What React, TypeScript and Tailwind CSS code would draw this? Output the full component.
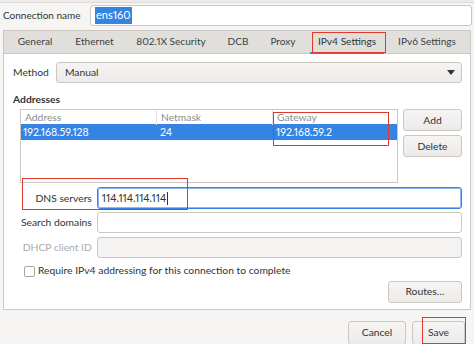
import React from 'react';

const tabs = [
  { label: 'General', w: 'w-[58px]' },
  { label: 'Ethernet', w: 'w-[61px]' },
  { label: '802.1X Security', w: 'w-[92px]' },
  { label: 'DCB', w: 'w-[42px]' },
  { label: 'Proxy', w: 'w-[48px]' },
  { label: 'IPv4 Settings', w: 'w-[80px]', active: true },
  { label: 'IPv6 Settings', w: 'w-[80px]' },
];

const Button: React.FC<{ className?: string; children: React.ReactNode }> = ({
  className = '',
  children,
}) => (
  <div
    className={`flex items-center justify-center rounded-[3px] border border-[#cdc7c2] bg-gradient-to-b from-[#f6f5f4] to-[#edebe9] text-[#2e3436] ${className}`}
  >
    {children}
  </div>
);

const FieldRow: React.FC<{
  label: string;
  disabled?: boolean;
  className?: string;
}> = ({ label, disabled, className = '' }) => (
  <div className={`flex h-[21px] items-center ${className}`}>
    <div
      className={`w-[85px] whitespace-nowrap pr-[5px] text-right ${disabled ? 'text-[#a9abab]' : 'text-[#2e3436]'}`}
    >
      {label}
    </div>
    <div
      className={`h-full w-[366px] rounded-[3px] border border-[#cdc7c2] ${disabled ? 'bg-[#f4f3f2]' : 'bg-white'}`}
    />
  </div>
);

export default function App() {
  return (
    <div className="relative h-[344px] w-[474px] overflow-hidden whitespace-nowrap bg-[#f6f5f4] font-['Lato','Noto_Sans',sans-serif] text-[10.3px] text-[#2e3436] lining-nums proportional-nums">
      <div className="h-[3px] border-b border-[#dedbd8] bg-[#ecebe9]" />

      {/* connection name */}
      <div className="flex h-[26px] items-center pb-[1px]">
        <div className="w-[90px] pl-[3px] text-[10px]">Connection name</div>
        <div className="flex h-[21px] w-[382px] items-center rounded-[3px] border border-[#cdc7c2] bg-white pl-[4px] text-[11px]">
          <span className="bg-[#3584e4] px-[1px] text-white">ens160</span>
        </div>
      </div>

      {/* notebook */}
      <div className="ml-[3px] mt-[1px] h-[280px] w-[468px] border border-[#cdc7c2] bg-white">
        <div className="flex h-[23px] border-b border-[#cdc7c2] bg-[#e1dfdc] pl-[2px]">
          {tabs.map((t) => (
            <div
              key={t.label}
              className={`${t.w} relative flex items-center justify-center text-[10.1px] ${t.active ? 'text-[#2e3436]' : 'text-[#3d3f40]'}`}
            >
              {t.label}
              {t.active && (
                <div className="absolute bottom-[-1px] left-[3px] right-[3px] h-[2px] bg-[#3584e4]" />
              )}
            </div>
          ))}
        </div>

        <div className="px-[8px] pt-[8px]">
          {/* method */}
          <div className="flex h-[21px] items-center">
            <div className="w-[44px] pl-[1px]">Method</div>
            <Button className="h-full w-[407px] !justify-between pl-[8px] pr-[6px]">
              <span>Manual</span>
              <svg width="8" height="5" viewBox="0 0 8 5">
                <path d="M0 0 L8 0 L4 5 Z" fill="#2e3436" />
              </svg>
            </Button>
          </div>

          <div className="mt-[9px] pl-[1px] font-bold">Addresses</div>

          {/* table + buttons */}
          <div className="mt-[2px] flex gap-[5px] pl-[8px]">
            <div className="h-[74px] w-[378px] border border-[#cdc7c2] bg-white">
              <div className="flex h-[14px] items-center text-[#8b8e8f]">
                <div className="w-[136px] border-r border-[#e6e4e2] pl-[4px]">Address</div>
                <div className="w-[116px] border-r border-[#e6e4e2] pl-[4px]">Netmask</div>
                <div className="pl-[4px]">Gateway</div>
              </div>
              <div className="flex h-[16px] items-center bg-[#3584e4] text-[10.5px] text-white">
                <div className="w-[136px] pl-[2px]">192.168.59.128</div>
                <div className="w-[116px] pl-[3px]">24</div>
                <div className="pl-[3px]">192.168.59.2</div>
              </div>
            </div>
            <div className="flex flex-col gap-[4px]">
              <Button className="h-[22px] w-[59px]">Add</Button>
              <Button className="h-[22px] w-[59px]">Delete</Button>
            </div>
          </div>

          {/* dns */}
          <div className="mt-[4px] flex h-[22px] items-center">
            <div className="w-[85px] pr-[5px] text-right">DNS servers</div>
            <div className="flex h-full w-[366px] items-center rounded-[3px] border border-[#3584e4] bg-white pl-[4px] text-[10.5px] shadow-[inset_0_0_0_1px_#8fb9ee]">
              114.114.114.114
              <span className="ml-[1px] inline-block h-[13px] w-[1px] bg-[#2e3436]" />
            </div>
          </div>

          <FieldRow label="Search domains" className="mt-[3px]" />
          <FieldRow label="DHCP client ID" disabled className="mt-[4px]" />

          <div className="mt-[5px] flex items-center gap-[3px] pl-[12px]">
            <div className="h-[11px] w-[11px] rounded-[2px] border border-[#a9a6a2] bg-white" />
            <span>Require IPv4 addressing for this connection to complete</span>
          </div>

          <div className="mt-[2px] flex justify-end">
            <Button className="h-[22px] w-[74px]">Routes…</Button>
          </div>
        </div>
      </div>

      {/* footer */}
      <div className="mt-[11px] flex justify-end gap-[6px] pr-[9px]">
        <Button className="h-[24px] w-[58px]">Cancel</Button>
        <Button className="h-[24px] w-[53px]">Save</Button>
      </div>

      {/* annotation boxes */}
      <div className="absolute left-[312px] top-[32px] h-[21px] w-[74px] border border-[#e0392b]" />
      <div className="absolute left-[273px] top-[112px] h-[34px] w-[116px] border border-[#e0392b]" />
      <div className="absolute left-[22px] top-[178px] h-[32px] w-[166px] border border-[#e0392b]" />
      <div className="absolute left-[422px] top-[317px] h-[27px] w-[44px] border border-[#e0392b]" />
    </div>
  );
}
